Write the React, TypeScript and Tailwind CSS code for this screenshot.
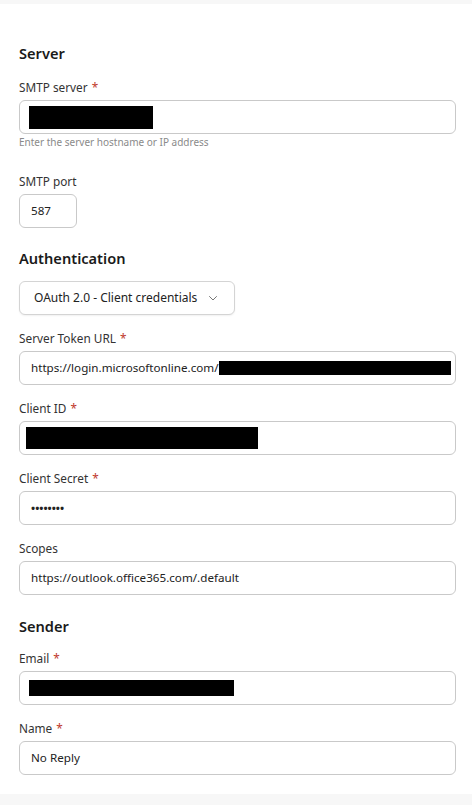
const Label = ({ text, required }: { text: string; required?: boolean }) => (
  <label className="block text-[11.8px] leading-[18px] text-[#333]">
    {text}
    {required && <span className="ml-[4px] text-[#c0392b]">*</span>}
  </label>
);

const Redacted = ({ w, h }: { w: string; h: string }) => <span className={`block bg-black ${w} ${h}`} />;

const Box = ({ children, className = '' }: { children?: React.ReactNode; className?: string }) => (
  <div
    className={`flex h-[34px] items-center rounded-[6px] border border-[#c9c9c9] bg-white text-[11.65px] text-[#222] ${className}`}
  >
    {children}
  </div>
);

const Field = ({
  label,
  required,
  children,
  className = 'mt-[14px]',
}: {
  label: string;
  required?: boolean;
  children: React.ReactNode;
  className?: string;
}) => (
  <div className={className}>
    <Label text={label} required={required} />
    <div className="mt-[4px]">{children}</div>
  </div>
);

const Heading = ({ text, className }: { text: string; className: string }) => (
  <h2 className={`text-[14.6px] font-semibold leading-[24px] text-[#1a1a1a] ${className}`}>{text}</h2>
);

export default function App() {
  return (
    <div
      className="min-h-[805px] bg-[#f7f7f7] pt-[4px]"
      style={{ fontFamily: '"Noto Sans", "Open Sans", sans-serif' }}
    >
      <div className="bg-white pb-[19px] pl-[19px] pr-[16px] pt-[37px]">
        <Heading text="Server" className="" />

        <Field label="SMTP server" required className="mt-[13px]">
          <Box className="pl-[9px]">
            <Redacted w="w-[124px]" h="h-[23px]" />
          </Box>
        </Field>
        <p className="text-[10px] leading-[16px] text-[#8a8a8a]">Enter the server hostname or IP address</p>

        <Field label="SMTP port" className="mt-[22px]">
          <Box className="w-[58px] pl-[11px]">587</Box>
        </Field>

        <Heading text="Authentication" className="mt-[18px]" />
        <div className="mt-[11px]">
          <div className="flex h-[34px] w-[216px] items-center rounded-[6px] border border-[#d4d4d4] bg-white pl-[14px] text-[12px] text-[#222] shadow-[0_1px_2px_rgba(0,0,0,0.06)]">
            <span>OAuth 2.0 - Client credentials</span>
            <svg className="ml-auto mr-[17px]" width="8" height="5" viewBox="0 0 8 5" fill="none">
              <path d="M0.5 0.5l3.5 3.5 3.5-3.5" stroke="#777" strokeWidth="1" strokeLinecap="round" strokeLinejoin="round" />
            </svg>
          </div>
        </div>

        <Field label="Server Token URL" required className="mt-[14px]">
          <Box className="overflow-hidden pl-[11px]">
            <span className="whitespace-nowrap">https://login.microsoftonline.com/</span>
            <span className="mr-[4px] block h-[14px] flex-1 bg-black" />
          </Box>
        </Field>

        <Field label="Client ID" required>
          <Box className="pl-[6px]">
            <Redacted w="w-[232px]" h="h-[22px]" />
          </Box>
        </Field>

        <Field label="Client Secret" required>
          <Box className="pl-[11px]">
            <span className="text-[11px] font-bold tracking-[0px]">••••••••</span>
          </Box>
        </Field>

        <Field label="Scopes">
          <Box className="pl-[11px]">https://outlook.office365.com/.default</Box>
        </Field>

        <Heading text="Sender" className="mt-[19px]" />

        <Field label="Email" required className="mt-[11px]">
          <Box className="pl-[9px]">
            <Redacted w="w-[205px]" h="h-[16px]" />
          </Box>
        </Field>

        <Field label="Name" required>
          <Box className="pl-[11px]">No Reply</Box>
        </Field>
      </div>
    </div>
  );
}
